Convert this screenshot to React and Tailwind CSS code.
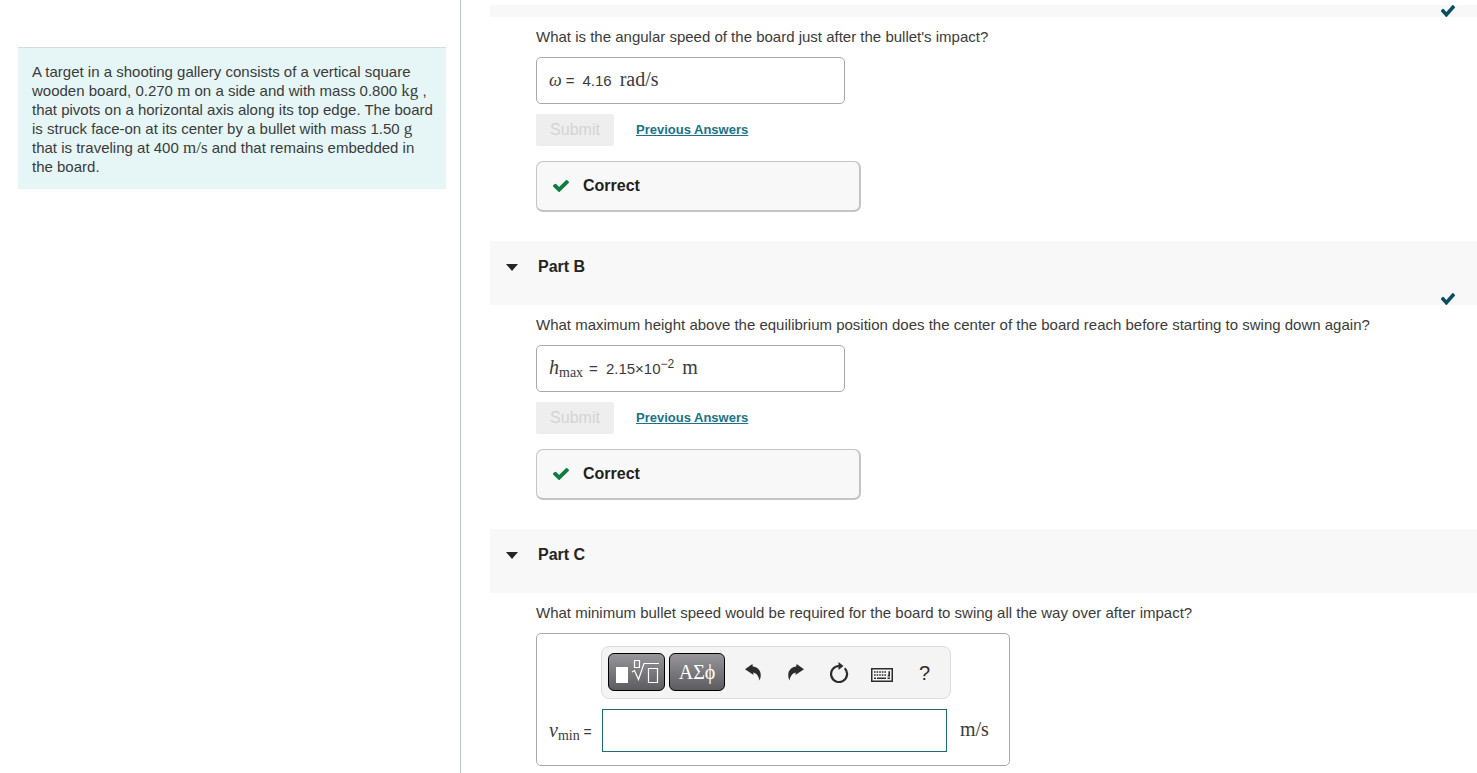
import clsx from 'clsx'

const serif = 'font-["Liberation_Serif",serif]'

function Check({ className }) {
  return (
    <svg viewBox="121 334 1550 1188" preserveAspectRatio="none" className={className} fill="currentColor" aria-hidden="true">
      <path d="M1671 566q0 40-28 68l-724 724-136 136q-28 28-68 28t-68-28l-136-136-362-362q-28-28-28-68t28-68l136-136q28-28 68-28t68 28l294 295 656-657q28-28 68-28t68 28l136 136q28 28 28 68z" />
    </svg>
  )
}

function Unit({ large, children }) {
  return <span className={clsx(serif, 'leading-none', large ? 'text-xl' : 'text-[17px]')}>{children}</span>
}

function Variable({ name, sub }) {
  return (
    <span className={clsx(serif, 'leading-none', sub ? 'text-xl' : 'text-lg')}>
      <i>{name}</i>
      {sub && <sub className="text-sm leading-none">{sub}</sub>}
    </span>
  )
}

function PartHeader({ title, done }) {
  return (
    <div className="flex h-16 items-start justify-between bg-[#f8f8f8]">
      <button type="button" className="flex items-center gap-5 pt-4 pl-4 text-base leading-5 font-bold text-[#252525]">
        <svg viewBox="0 0 12 7" className="h-[7px] w-3" fill="currentColor" aria-hidden="true">
          <path d="M0 0h12L6 7z" />
        </svg>
        {title}
      </button>
      {done && <Check className="mr-[22px] h-3 w-[14px] self-end text-[#07505f]" />}
    </div>
  )
}

function Question({ children }) {
  return <p className="py-[10px] text-[15px] leading-5">{children}</p>
}

function SolvedPart({ question, children }) {
  return (
    <div className="pb-[29px] pl-[46px]">
      <Question>{question}</Question>
      <div className="flex h-[47px] w-[309px] max-w-full items-center rounded-[5px] border border-[#a6a8ab] px-3 text-[15px]">
        <div className="flex items-baseline">{children}</div>
      </div>
      <div className="mt-[10px] flex items-center gap-[22px]">
        <button type="button" disabled className="h-8 w-[78px] rounded-[2px] bg-[#eeeeee] text-base text-[#d4d4d4]">
          Submit
        </button>
        <a href="#answers" className="text-[13px] font-bold text-[#1a7289] underline">Previous Answers</a>
      </div>
      <div className="mt-[15px] flex h-[51px] w-[325px] max-w-full items-center gap-[14px] rounded-[7px] border border-r-2 border-b-2 border-[#c4c4c4] bg-[#f8f8f8] pl-4 text-base font-bold text-[#1f1f1f]">
        <Check className="h-3 w-4 text-[#0e7c3f]" />
        Correct
      </div>
    </div>
  )
}

function CurvedArrow({ flip }) {
  return (
    <svg viewBox="0 0 16 17" className={clsx('h-[17px] w-4', flip && '-scale-x-100')} fill="currentColor" aria-hidden="true">
      <path d="M0 5.200 7.400 0l.4 2.600C13.400 3.200 18 8 14.600 16.600 13.600 12.400 12 9.600 8.200 8.600L8.600 11z" />
    </svg>
  )
}

function Toolbar() {
  const dark = 'flex h-[38px] shrink-0 items-center justify-center rounded-md border border-black bg-linear-to-b from-[#96969b] to-[#5d5d61] text-white'
  const plain = 'flex w-[43px] items-center justify-center text-[#2c2c2c]'
  return (
    <div role="toolbar" className="flex h-[53px] w-[350px] items-stretch rounded-lg border border-[#dcdcdc] bg-[#f4f4f4] py-[6px] pl-[6px]">
      <button type="button" aria-label="Templates" className={clsx(dark, 'w-[57px]')}>
        <svg viewBox="0 0 44 26" className="h-[26px] w-11" aria-hidden="true">
          <path d="M1 8h12v16H1z" fill="#fff" />
          <path d="M19.500 1.500h5v7h-5zM17 13l2.500-1.500 4 9L29 4.500h15M33.500 9.500h9v14h-9z" fill="none" stroke="#fff" strokeWidth="1.200" />
        </svg>
      </button>
      <button type="button" aria-label="Symbols" className={clsx(dark, serif, 'ml-1 w-14 text-xl')}>ΑΣϕ</button>
      <div className="ml-[6px] flex">
        <button type="button" aria-label="Undo" className={plain}><CurvedArrow /></button>
        <button type="button" aria-label="Redo" className={plain}><CurvedArrow flip /></button>
        <button type="button" aria-label="Reset" className={plain}>
          <svg viewBox="0 0 20 21" className="h-[21px] w-5" aria-hidden="true">
            <path d="M15.700 6.300A8 8 0 1 1 10 4" fill="none" stroke="currentColor" strokeWidth="2.200" />
            <path d="M9.500 0l5 4-5 4z" fill="currentColor" />
          </svg>
        </button>
        <button type="button" aria-label="Keyboard" className={plain}>
          <svg viewBox="0 0 22 14" className="mt-1 h-[14px] w-[22px]" fill="none" stroke="currentColor" aria-hidden="true">
            <path d="M.75.75h20.500v12.500H.75z" strokeWidth="1.500" />
            <path d="M3 4h13M3 7h13" strokeWidth="1.600" strokeDasharray="1.600 1" />
            <path d="M3 10.300h2M6 10.300h9M16.500 10.300h2.500M18.200 3.200v4.600h-1.500" strokeWidth="1.600" />
          </svg>
        </button>
        <button type="button" aria-label="Help" className={clsx(plain, 'text-xl')}>?</button>
      </div>
    </div>
  )
}

export default function App() {
  return (
    <div className='flex min-h-screen bg-white font-["Liberation_Sans",Arial,sans-serif] text-[#3b3b3b]'>
      <aside className="w-[461px] shrink-0 border-r border-[#b9c6ca] pt-[47px] pr-[14px] pl-[18px]">
        <div className="border-t border-[#cfdedf] bg-[#e6f6f7] pt-[14px] pr-2 pb-[13px] pl-[14px] text-[15px] leading-[19px]">
          A target in a shooting gallery consists of a vertical square wooden board, 0.270 <Unit>m</Unit> on a side and
          with mass 0.800 <Unit>kg</Unit> , that pivots on a horizontal axis along its top edge. The board is struck
          face-on at its center by a bullet with mass 1.50 <Unit>g</Unit> that is traveling at 400 <Unit>m/s</Unit> and
          that remains embedded in the board.
        </div>
      </aside>

      <main className="min-w-0 flex-1 pt-[5px] pl-[29px]">
        <div className="flex h-3 justify-end bg-[#f8f8f8]">
          <Check className="mr-[22px] h-3 w-[14px] text-[#07505f]" />
        </div>
        <SolvedPart question="What is the angular speed of the board just after the bullet's impact?">
          <Variable name="ω" />
          <span className="mr-2 ml-1">=</span>
          <span className="mr-2">4.16</span>
          <Unit large>rad/s</Unit>
        </SolvedPart>

        <PartHeader title="Part B" done />
        <SolvedPart question="What maximum height above the equilibrium position does the center of the board reach before starting to swing down again?">
          <Variable name="h" sub="max" />
          <span className="mr-2 ml-[6px]">=</span>
          <span className="mr-2">2.15×10<sup className="text-xs">−2</sup></span>
          <Unit large>m</Unit>
        </SolvedPart>

        <PartHeader title="Part C" />
        <div className="pb-[6px] pl-[46px]">
          <Question>What minimum bullet speed would be required for the board to swing all the way over after impact?</Question>
          <div className="w-[474px] rounded-[5px] border border-[#a6a8ab] pt-3 pb-[13px]">
            <div className="pl-16">
              <Toolbar />
            </div>
            <div className="mt-[10px] flex items-center">
              <label htmlFor="vmin" className="w-[65px] shrink-0 pl-3 text-sm">
                <Variable name="v" sub="min" /> =
              </label>
              <input id="vmin" type="text" className="h-[43px] w-[345px] border border-[#1f6b78] bg-white px-2 text-base outline-none" />
              <span className="ml-[13px]"><Unit large>m/s</Unit></span>
            </div>
          </div>
        </div>
      </main>
    </div>
  )
}
